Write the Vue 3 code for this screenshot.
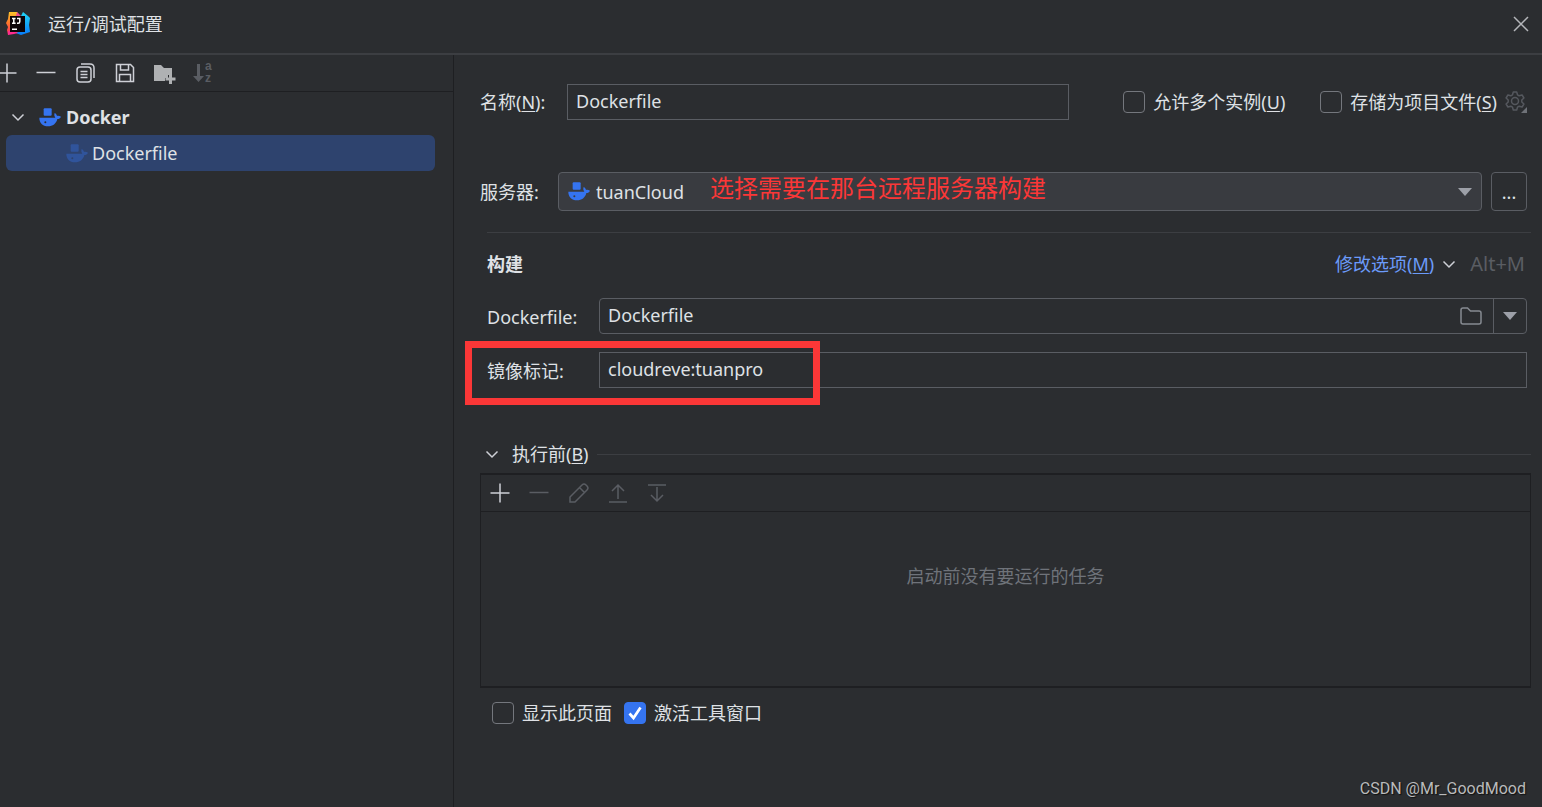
<template>
  <div class="dialog">
    <svg class="symbols" aria-hidden="true">
      <symbol id="docker" viewBox="0 0 66 57">
        <path d="M17 1h18q3 0 3 3v16q0 3-3 3H17q-3 0-3-3V4q0-3 3-3z" />
        <path
          fill-rule="evenodd"
          d="M1 29h48c-3-4-4-9-2-14 4 2 6 5 7 9 4-1 8 0 12 2-2 5-6 7-11 7-3 14-14 22-28 22C11 55 1 45 1 29zM19 40a3 3 0 1 0 0 6 3 3 0 0 0 0-6z"
        />
      </symbol>
      <symbol id="chevron" viewBox="0 0 14 14">
        <path d="M1.500 4.500 7 10l5.500-5.500" fill="none" stroke="currentColor" stroke-width="1.500" />
      </symbol>
      <symbol id="plus" viewBox="0 0 20 20">
        <path d="M10 .5v19M.5 10h19" fill="none" stroke="currentColor" stroke-width="1.500" />
      </symbol>
      <symbol id="minus" viewBox="0 0 20 20">
        <path d="M.5 9.500h19" fill="none" stroke="currentColor" stroke-width="1.500" />
      </symbol>
      <symbol id="triangle" viewBox="0 0 14 8">
        <path d="M0 0h14L7 8z" />
      </symbol>
    </svg>

    <header class="titlebar">
      <svg class="logo" viewBox="0 0 24 24">
        <defs>
          <linearGradient id="warm" x1="0" y1="0" x2="0" y2="1">
            <stop offset="0" stop-color="#fcc42c" />
            <stop offset="0.45" stop-color="#fc7a2a" />
            <stop offset="1" stop-color="#fe2b63" />
          </linearGradient>
          <linearGradient id="cool" x1="0" y1="0" x2="0" y2="1">
            <stop offset="0" stop-color="#21d6f5" />
            <stop offset="1" stop-color="#087cfa" />
          </linearGradient>
        </defs>
        <path fill="url(#warm)" d="M3 0h8l3 4-4 14-3 2-5 3-1-5 1-3-2-4 2-4z" />
        <path fill="#f0478f" d="M11 0l4 4h-5z" />
        <path fill="url(#cool)" d="M17 0l5 4 2 2-1 7 1 7-9 3-8-3 10-4-2-12z" />
        <path fill="#fe2b8f" d="M2 19l6-1 4 3-4 1-6 1z" />
        <path fill="#0c0509" d="M4 4h15v16H4z" />
        <path
          fill="none"
          stroke="#fff"
          stroke-width="1.500"
          d="M6 6.500h3.600M7.800 6.500v5M6 11.300h3.600M11 6.500h2.800v3q0 1.800-1.600 1.800H11M6 17.200h5"
        />
      </svg>
      <h1>运行/调试配置</h1>
      <button class="close" aria-label="关闭">
        <svg viewBox="0 0 16 16"><path d="M1 1l14 14M15 1 1 15" /></svg>
      </button>
    </header>

    <div class="content">
      <aside class="sidebar">
        <div class="toolbar">
          <button aria-label="添加"><svg><use href="#plus" /></svg></button>
          <button aria-label="移除"><svg><use href="#minus" /></svg></button>
          <button aria-label="复制">
            <svg viewBox="0 0 20 20" class="line">
              <rect x="1" y="4" width="14" height="15" rx="3" />
              <path d="M5 1h9q4 0 4 4v10M4.500 8.500h7M4.500 11.500h7M4.500 14.500h7" />
            </svg>
          </button>
          <button aria-label="保存">
            <svg viewBox="0 0 20 20" class="line">
              <path d="M1.500 1.500h14l3 3v14h-17zM5.500 2v5h8V2M4.500 18v-6.500h11V18" />
            </svg>
          </button>
          <button aria-label="新建文件夹">
            <svg class="folder-add" viewBox="0 0 20 20">
              <path d="M0 2h7l3 3h8v7h-4v3h-3v3H0z" />
              <path d="M15 11h3v3.500h3.500v3H18V21h-3v-3.500h-3.500v-3H15z" />
            </svg>
          </button>
          <button aria-label="排序" disabled>
            <svg class="sort" viewBox="0 0 20 20">
              <path d="M4 1h3v12h4l-5.500 6L0 13h4z" />
              <text x="12" y="7">a</text>
              <text x="12" y="19">z</text>
            </svg>
          </button>
        </div>
        <ul class="tree">
          <li class="group">
            <svg class="chevron"><use href="#chevron" /></svg>
            <svg class="docker"><use href="#docker" /></svg>
            <span>Docker</span>
          </li>
          <li class="item">
            <svg class="docker faded"><use href="#docker" /></svg>
            <span>Dockerfile</span>
          </li>
        </ul>
      </aside>

      <main class="main">
        <div class="row name-row">
          <label for="name">名称(<u>N</u>):</label>
          <input id="name" v-model="name" class="field" type="text" />
          <label class="check">
            <input v-model="multiple" type="checkbox" />
            <span>允许多个实例(<u>U</u>)</span>
          </label>
          <label class="check">
            <input v-model="stored" type="checkbox" />
            <span>存储为项目文件(<u>S</u>)</span>
          </label>
          <button class="gear" aria-label="存储设置">
            <svg viewBox="0 0 22 22">
              <path
                class="outline"
                d="M8.300 1h3.400l.8 2.800 1.700 1 2.900-.8 1.800 3-2.100 2v2l2.100 2-1.800 3-2.900-.8-1.700 1-.8 2.800H8.300l-.8-2.800-1.700-1-2.900.8-1.800-3 2.100-2V9L1.100 7l1.800-3 2.900.8 1.700-1z"
              />
              <circle class="outline" cx="10" cy="10" r="3.500" />
              <path class="corner" d="M22 16v6h-6z" />
            </svg>
          </button>
        </div>

        <div class="row server-row">
          <label for="server">服务器:</label>
          <div class="server">
            <select id="server" v-model="server">
              <option v-for="s in servers" :key="s">{{ s }}</option>
            </select>
            <svg class="docker"><use href="#docker" /></svg>
            <svg class="triangle"><use href="#triangle" /></svg>
            <span class="note">选择需要在那台远程服务器构建</span>
          </div>
          <button class="more">...</button>
        </div>

        <section class="build">
          <div class="build-head">
            <h2>构建</h2>
            <a href="#">修改选项(<u>M</u>)</a>
            <svg class="chevron"><use href="#chevron" /></svg>
            <span class="shortcut">Alt+M</span>
          </div>
          <div class="row">
            <label for="dockerfile">Dockerfile:</label>
            <div class="combo">
              <input id="dockerfile" v-model="dockerfile" type="text" />
              <button class="browse" aria-label="浏览">
                <svg viewBox="0 0 22 18">
                  <path d="M3 1h4.500L10.500 4H19q2 0 2 2v9q0 2-2 2H3q-2 0-2-2V3q0-2 2-2z" />
                </svg>
              </button>
              <button class="drop" aria-label="展开">
                <svg class="triangle"><use href="#triangle" /></svg>
              </button>
            </div>
          </div>
          <div class="row tag-row">
            <label for="tag">镜像标记:</label>
            <input id="tag" v-model="tag" class="field" type="text" />
            <div class="highlight"></div>
          </div>
        </section>

        <section class="before">
          <div class="before-head">
            <svg class="chevron"><use href="#chevron" /></svg>
            <h3>执行前(<u>B</u>)</h3>
          </div>
          <div class="tasks">
            <div class="toolbar">
              <button aria-label="添加任务"><svg><use href="#plus" /></svg></button>
              <button aria-label="移除任务" disabled><svg><use href="#minus" /></svg></button>
              <button aria-label="编辑任务" disabled>
                <svg viewBox="0 0 20 20" class="line">
                  <path d="M1 19v-5L13 2q2-2 4 0l1 1q2 2 0 4L6 19zM10.500 4.500l5 5" />
                </svg>
              </button>
              <button aria-label="上移" disabled>
                <svg viewBox="0 0 20 20" class="line">
                  <path d="M1 19h18M10 16V2M4 8l6-6 6 6" />
                </svg>
              </button>
              <button aria-label="下移" disabled>
                <svg viewBox="0 0 20 20" class="line">
                  <path d="M1 2h18M10 4v14M4 12l6 6 6-6" />
                </svg>
              </button>
            </div>
            <p>启动前没有要运行的任务</p>
          </div>
        </section>

        <div class="options">
          <label class="check">
            <input v-model="showPage" type="checkbox" />
            <span>显示此页面</span>
          </label>
          <label class="check">
            <input v-model="activate" type="checkbox" />
            <span>激活工具窗口</span>
          </label>
        </div>

        <footer>CSDN @Mr_GoodMood</footer>
      </main>
    </div>
  </div>
</template>

<script setup>
import { ref } from "vue";

const name = ref("Dockerfile");
const multiple = ref(false);
const stored = ref(false);
const servers = ["tuanCloud"];
const server = ref("tuanCloud");
const dockerfile = ref("Dockerfile");
const tag = ref("cloudreve:tuanpro");
const showPage = ref(false);
const activate = ref(true);
</script>

<style>
body {
  background: #2b2d30;
}
</style>

<style scoped>
* {
  box-sizing: border-box;
}
.dialog {
  min-height: 100vh;
  display: flex;
  flex-direction: column;
  background: #2b2d30;
  color: #dfe1e5;
  font-family: "Noto Sans", "Noto Sans CJK SC", sans-serif;
  font-size: 18px;
  line-height: 24px;
}
.symbols {
  position: absolute;
  width: 0;
  height: 0;
}
svg {
  display: block;
  flex: none;
  overflow: visible;
}
h1,
h2,
h3,
p,
ul {
  margin: 0;
  padding: 0;
  font-size: 18px;
  font-weight: 400;
}
u {
  text-underline-offset: 2px;
}
button,
input,
select {
  font: inherit;
  color: inherit;
  background: none;
  border: none;
  padding: 0;
  margin: 0;
  outline: none;
}
.titlebar {
  height: 55px;
  display: flex;
  align-items: center;
  padding: 0 13px 6px 6px;
  border-bottom: 2px solid #3c3e42;
}
.logo {
  width: 24px;
  height: 24px;
  margin-right: 18px;
}
.close {
  margin-left: auto;
}
.close svg {
  width: 16px;
  height: 16px;
  fill: none;
  stroke: #b4b6ba;
  stroke-width: 1.5;
}
.content {
  flex: 1;
  display: flex;
}
.sidebar {
  flex: 0 0 454px;
  border-right: 1px solid #1e1f22;
  overflow: hidden;
}
.toolbar {
  height: 37px;
  display: flex;
  align-items: center;
  gap: 19px;
  border-bottom: 1px solid #1e1f22;
  color: #ced0d6;
}
.toolbar button:nth-child(2) {
  margin-right: 1px;
}
.sidebar .toolbar {
  margin-left: -3px;
}
.toolbar svg {
  width: 20px;
  height: 20px;
  fill: currentColor;
}
.toolbar svg.line {
  fill: none;
  stroke: currentColor;
  stroke-width: 1.5;
}
.toolbar .folder-add {
  fill: #afb1b3;
}
.toolbar button:disabled {
  color: #5a5d63;
}
.sort text {
  font-family: "Liberation Sans", sans-serif;
  font-size: 12px;
  line-height: 12px;
  font-weight: 700;
}
.tree {
  list-style: none;
  padding: 7px 18px 0 6px;
}
.group,
.item {
  height: 36px;
  display: flex;
  align-items: center;
}
.group {
  padding-left: 5px;
  font-weight: 700;
}
.item {
  padding-left: 60px;
  border-radius: 6px;
  background: #2e436e;
}
.chevron {
  width: 14px;
  height: 14px;
  color: #ced0d6;
}
.docker {
  width: 22px;
  height: 19px;
  fill: #3574f0;
}
.group .docker {
  margin: 0 5px 0 14px;
}
.item .docker {
  margin-right: 4px;
}
.faded {
  opacity: 0.35;
}
.triangle {
  width: 14px;
  height: 8px;
  fill: #9da0a8;
}
.main {
  flex: 1;
  min-width: 0;
  display: flex;
  flex-direction: column;
  padding: 29px 11px 0 26px;
}
.row {
  display: flex;
  align-items: center;
  padding-right: 4px;
}
.field {
  flex: 1;
  min-width: 0;
  height: 36px;
  border: 1px solid #5a5d63;
  padding: 0 8px 2px;
}
.name-row > label:first-child {
  width: 87px;
}
.name-row .field {
  margin-right: 19px;
}
.check {
  display: flex;
  align-items: center;
  gap: 8px;
}
.name-row .check {
  margin-left: 35px;
}
.check input {
  appearance: none;
  width: 22px;
  height: 22px;
  border: 1px solid #74777d;
  border-radius: 4px;
}
.check input:checked {
  border-color: #3574f0;
  background: #3574f0
    url("data:image/svg+xml,%3Csvg xmlns='http://www.w3.org/2000/svg' viewBox='0 0 20 20'%3E%3Cpath d='M4.500 10.500l4 4.500L15.500 4.500' fill='none' stroke='white' stroke-width='2.700'/%3E%3C/svg%3E");
}
.gear {
  margin-left: 8px;
}
.gear svg {
  width: 22px;
  height: 22px;
}
.gear .outline {
  fill: none;
  stroke: #55585e;
  stroke-width: 1.5;
  stroke-linejoin: round;
}
.gear .corner {
  fill: #6f7278;
}
.server-row {
  margin-top: 52px;
}
.server-row > label {
  width: 78px;
}
.server {
  position: relative;
  flex: 1;
}
.server select {
  appearance: none;
  display: block;
  width: 100%;
  height: 39px;
  padding: 0 37px;
  border: 1px solid #5a5d63;
  border-radius: 4px;
  background: #393b40;
}
.server .docker {
  position: absolute;
  left: 10px;
  top: 10px;
}
.server .triangle {
  position: absolute;
  right: 10px;
  top: 16px;
}
.note {
  position: absolute;
  left: 152px;
  top: 0;
  font-size: 24px;
  line-height: 32px;
  color: #fb3737;
  white-space: nowrap;
  pointer-events: none;
}
.more {
  width: 36px;
  height: 39px;
  margin-left: 9px;
  border: 1px solid #5a5d63;
  border-radius: 4px;
}
.build {
  margin: 21px 0 0 7px;
  border-top: 1px solid #3c3e42;
}
.build-head {
  display: flex;
  align-items: center;
  height: 65px;
  padding: 0 6px 4px 0;
}
.build-head h2 {
  font-weight: 700;
  margin-right: auto;
}
.build-head a {
  color: #6b9bfa;
  text-decoration: none;
}
.build-head .chevron {
  margin: 0 14px 0 8px;
}
.shortcut {
  font-size: 20px;
  color: #5a5d63;
}
.build .row label {
  width: 112px;
  padding-top: 2px;
}
.combo {
  flex: 1;
  display: flex;
  height: 36px;
  border: 1px solid #5a5d63;
  border-radius: 4px;
}
.combo input {
  flex: 1;
  min-width: 0;
  padding: 0 8px 2px;
}
.browse svg {
  width: 22px;
  height: 18px;
  fill: none;
  stroke: #868a91;
  stroke-width: 1.5;
}
.browse {
  padding: 0 11px;
}
.drop {
  padding: 0 9px;
  border-left: 1px solid #5a5d63;
}
.tag-row {
  position: relative;
  margin-top: 18px;
}
/* red frame drawn over the image tag row */
.highlight {
  position: absolute;
  left: -22px;
  top: -11px;
  width: 355px;
  height: 64px;
  border: 7px solid #fb3737;
  pointer-events: none;
}
.before {
  margin-top: 54px;
}
.before-head {
  display: flex;
  align-items: center;
  padding-left: 5px;
  height: 24px;
}
.before-head::after {
  content: "";
  flex: 1;
  height: 1px;
  margin-left: 8px;
  background: #3c3e42;
}
.before-head h3 {
  margin-left: 13px;
}
.tasks {
  display: flex;
  flex-direction: column;
  min-height: 215px;
  margin-top: 7px;
  border: 1px solid #1e1f22;
  border-width: 2px 1px;
}
.tasks .toolbar {
  padding-left: 9px;
}
.tasks p {
  margin: auto;
  padding-bottom: 46px;
  color: #6f737a;
}
.options {
  display: flex;
  gap: 12px;
  margin-top: 13px;
  padding-left: 12px;
}
footer {
  margin-top: auto;
  padding: 0 5px 6px 0;
  text-align: right;
  font-family: Roboto, sans-serif;
  font-size: 16px;
  color: #b9babb;
  text-shadow: 1px 1px 1px #111;
}
</style>
